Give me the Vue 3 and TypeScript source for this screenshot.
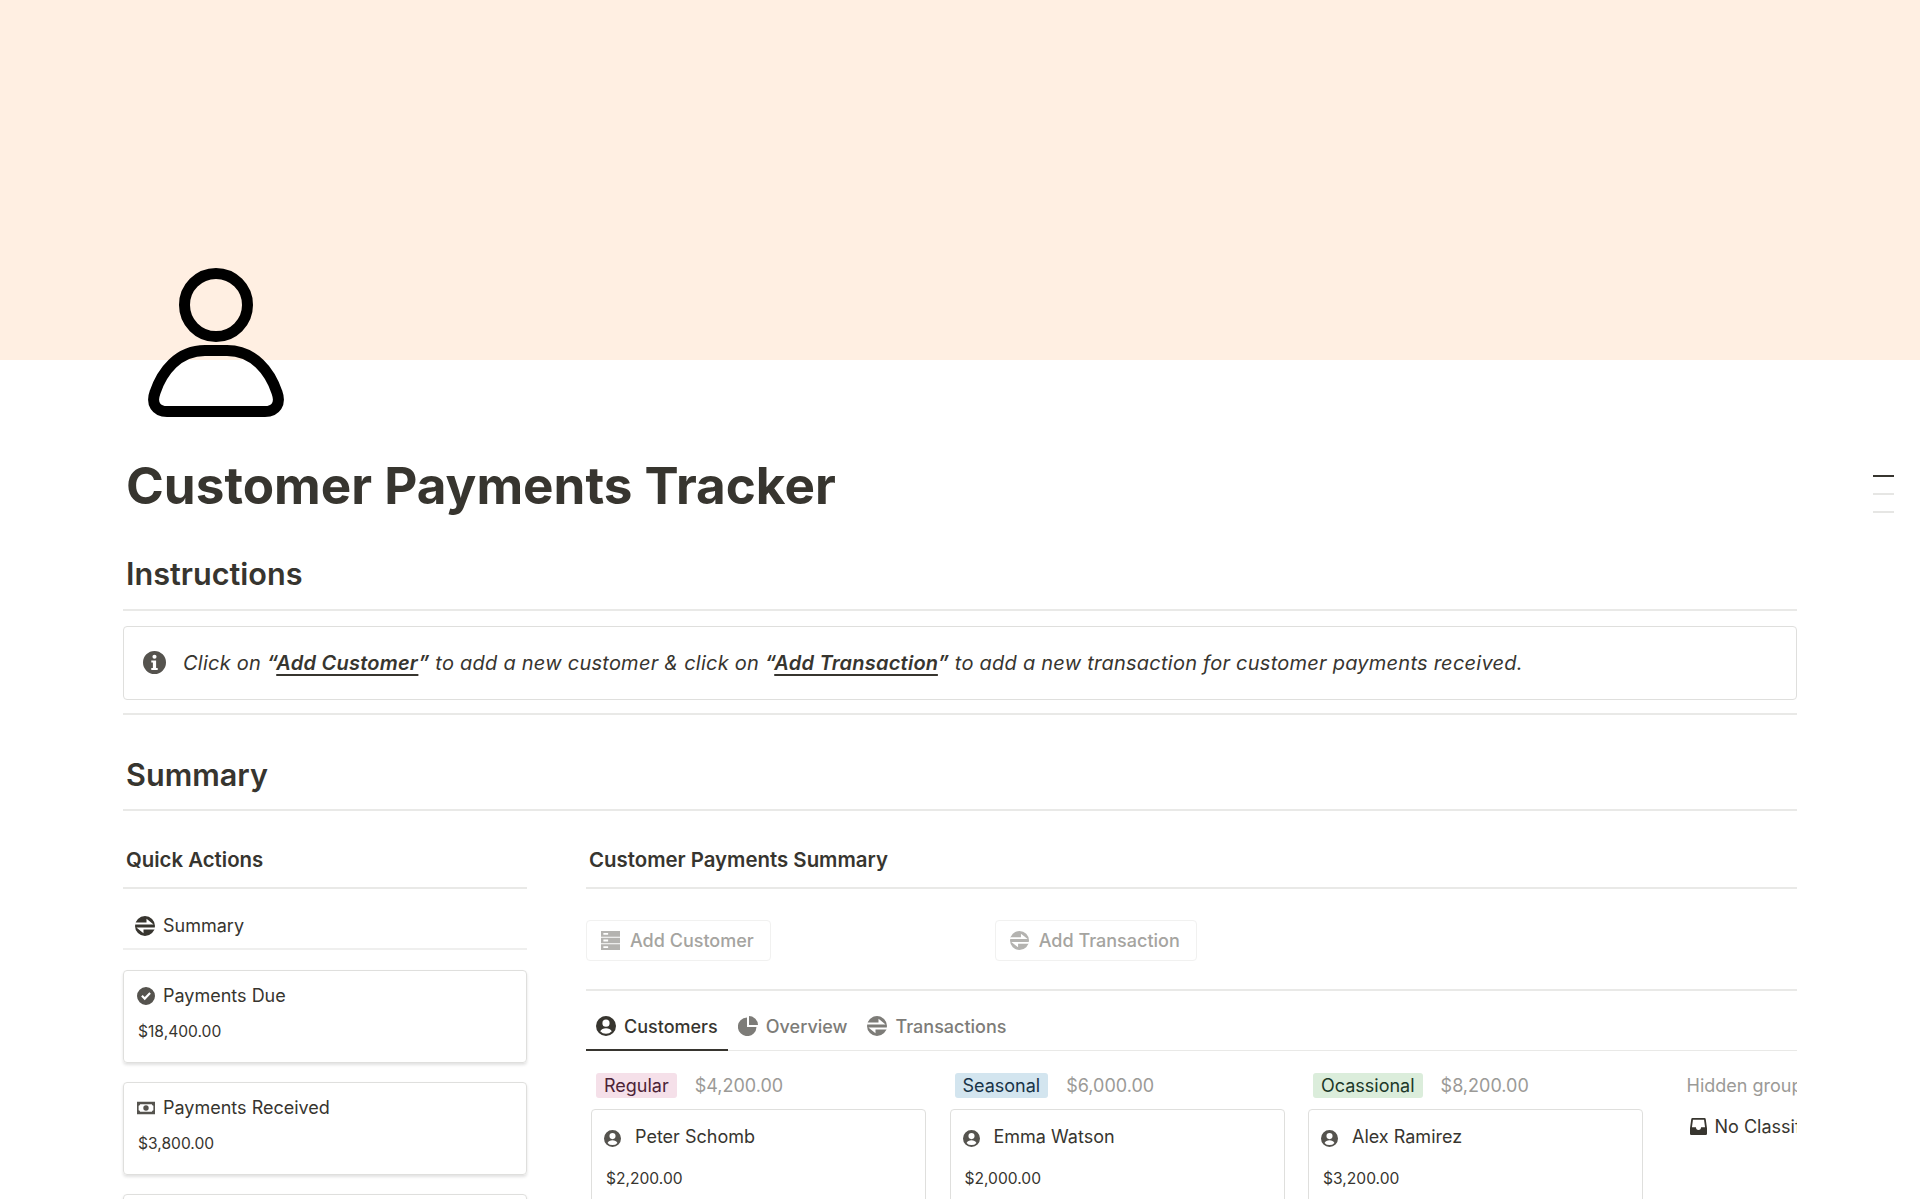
<script setup lang="ts">
const icons: Record<string, string> = {
  user: 'M10 0a10 10 0 1 0 0 20a10 10 0 1 0 0-20zM10 3.600a3.600 3.600 0 1 1 0 7.200a3.600 3.600 0 1 1 0-7.200zM4.200 15.200c1-2 3.200-3 5.800-3s4.800 1 5.800 3a7.800 7.800 0 0 1-11.600 0z',
  swap: 'M0 10a10 10 0 1 0 20 0a10 10 0 1 0-20 0zM.8 6.500H11.500V2.800L18.600 8.500H.2zM19.200 13.500H8.500v3.700L1.400 11.500H19.800z',
  check: 'M10 0a10 10 0 1 0 0 20a10 10 0 1 0 0-20zM8.600 14.600L4.600 10.600l1.700-1.700 2.300 2.300 5.100-5.400 1.700 1.600z',
  money: 'M0 3h20v14H0zM3.500 5.800a2 2 0 0 1-1.700 1.700v5a2 2 0 0 1 1.700 1.700h13a2 2 0 0 1 1.700-1.700v-5a2 2 0 0 1-1.700-1.700zM10 7a3 3 0 1 0 0 6a3 3 0 1 0 0-6z',
  table: 'M0 0h20v6H0zM2.500 2v2h5V2zM0 7h20v6H0zM2.500 9v2h5V9zM0 14h20v6H0zM2.500 16v2h5v-2z',
  pie: 'M9 1.500v9.500h9.500A9.300 9.300 0 1 1 9 1.500zM11 0a9 9 0 0 1 9 9h-9z',
  info: 'M10 0a10 10 0 1 0 0 20a10 10 0 1 0 0-20zM10 3.200a1.800 1.800 0 1 1 0 3.600a1.800 1.800 0 1 1 0-3.600zM7.200 8.200h4.200v6.600h1.400v1.800H7.200v-1.800h1.400v-4.800H7.200z',
  tray: 'M3 0h14a1.500 1.500 0 0 1 1.500 1.300L20 12v6.500a1.500 1.500 0 0 1-1.500 1.500h-17A1.500 1.500 0 0 1 0 18.500V12L1.500 1.300A1.500 1.500 0 0 1 3 0zM3.500 2L2.300 11h4.700a3 3 0 0 0 6 0h4.700L16.500 2z',
}
const tabs = [
  { label: 'Customers', icon: 'user', active: true },
  { label: 'Overview', icon: 'pie', active: false },
  { label: 'Transactions', icon: 'swap', active: false },
]
const groups = [
  { tag: 'Regular', cls: 'pink', total: '$4,200.00', name: 'Peter Schomb', amount: '$2,200.00' },
  { tag: 'Seasonal', cls: 'blue', total: '$6,000.00', name: 'Emma Watson', amount: '$2,000.00' },
  { tag: 'Ocassional', cls: 'green', total: '$8,200.00', name: 'Alex Ramirez', amount: '$3,200.00' },
]
const stats = [
  { label: 'Payments Due', icon: 'check', value: '$18,400.00' },
  { label: 'Payments Received', icon: 'money', value: '$3,800.00' },
]
</script>

<template>
  <div class="page">
    <div class="cover"></div>
    <div class="toc" aria-hidden="true">
      <span class="on"></span><span></span><span></span>
    </div>
    <main class="content">
      <svg class="page-icon" viewBox="0 0 138 150" fill="none" stroke="#000" stroke-width="11">
        <circle cx="69" cy="37" r="31.500" />
        <path d="M58 82.500h22c27 0 43 21 50 42 4 11-1 19-12 19H20c-11 0-16-8-12-19C15 103.500 31 82.500 58 82.500z" stroke-linejoin="round" />
      </svg>
      <h1>Customer Payments Tracker</h1>

      <h2 class="instr">Instructions</h2>
      <div class="rule"></div>
      <div class="callout">
        <svg class="ic info" viewBox="0 0 20 20"><path :d="icons.info" /></svg>
        <p>Click on <b>“<u>Add Customer</u>”</b> to add a new customer &amp; click on <b>“<u>Add Transaction</u>”</b> to add a new transaction for customer payments received.</p>
      </div>
      <div class="rule after-callout"></div>

      <h2 class="summary">Summary</h2>
      <div class="rule"></div>

      <div class="columns">
        <section class="left">
          <h3>Quick Actions</h3>
          <div class="rule"></div>
          <div class="view-row">
            <svg class="ic swap" viewBox="0 0 20 20"><path :d="icons.swap" /></svg>
            <span>Summary</span>
          </div>
          <div class="stat" v-for="s in stats" :key="s.label">
            <div class="stat-title">
              <span class="stat-ic"><svg class="ic" viewBox="0 0 20 20"><path :d="icons[s.icon]" /></svg></span>
              <span>{{ s.label }}</span>
            </div>
            <div class="stat-value">{{ s.value }}</div>
          </div>
          <div class="stat"></div>
        </section>

        <section class="right">
          <h3>Customer Payments Summary</h3>
          <div class="rule"></div>
          <div class="buttons">
            <div class="btn first">
              <svg class="ic" viewBox="0 0 20 20"><path :d="icons.table" /></svg>
              <span>Add Customer</span>
            </div>
            <div class="btn">
              <svg class="ic" viewBox="0 0 20 20"><path :d="icons.swap" /></svg>
              <span>Add Transaction</span>
            </div>
          </div>
          <div class="rule"></div>
          <div class="tabs">
            <div class="tab" v-for="t in tabs" :key="t.label" :class="{ active: t.active }">
              <svg class="ic" viewBox="0 0 20 20"><path :d="icons[t.icon]" /></svg>
              <span>{{ t.label }}</span>
            </div>
          </div>
          <div class="board">
            <div class="col" v-for="g in groups" :key="g.tag">
              <div class="col-head">
                <span class="tag" :class="g.cls">{{ g.tag }}</span>
                <span class="total">{{ g.total }}</span>
              </div>
              <div class="card">
                <div class="card-name">
                  <svg class="ic" viewBox="0 0 20 20"><path :d="icons.user" /></svg>
                  <span>{{ g.name }}</span>
                </div>
                <div class="card-amt">{{ g.amount }}</div>
              </div>
            </div>
            <div class="hidden-col">
              <div class="hidden-head">Hidden groups</div>
              <div class="hidden-item">
                <svg class="ic" viewBox="0 0 20 20"><path :d="icons.tray" /></svg>
                <span>No Classification</span>
              </div>
            </div>
          </div>
        </section>
      </div>
    </main>
  </div>
</template>

<style>
html, body { margin: 0; background: #fff; overflow: hidden; }
</style>

<style scoped>
.page {
  position: relative;
  height: 1199px;
  overflow: hidden;
  background: #fff;
  color: #37352f;
  font-family: Inter, "Liberation Sans", sans-serif;
}
.cover { height: 360px; background: #ffefe2; }
.toc { position: absolute; left: 1873px; top: 475px; display: flex; flex-direction: column; gap: 16px; }
.toc span { display: block; width: 21px; height: 2px; background: #e6e6e4; }
.toc span.on { background: #37352f; }
.content { margin: -92px 123px 0; width: 1674px; }
.page-icon { display: block; width: 138px; height: 150px; margin-left: 24px; position: relative; }
h1 { margin: 37px 0 0 3px; font-size: 51.200px; line-height: 60px; font-weight: 700; color: #37352f; }
h2 { margin: 0 0 0 3px; font-size: 30.600px; line-height: 38px; font-weight: 600; color: #37352f; }
.instr { margin-top: 40px; }
.summary { margin-top: 41px; }
.rule { height: 2px; background: #e9e9e7; }
.instr + .rule { margin-top: 16px; }
.summary + .rule { margin-top: 15px; }
.callout {
  display: flex;
  height: 74px;
  box-sizing: border-box;
  margin-top: 15px;
  padding: 0 19px;
  align-items: center;
  border: 1px solid #dfdfdd;
  border-radius: 4px;
  gap: 17px;
}
.callout .ic { width: 23px; height: 23px; fill: #55534e; margin-top: -2px; }
.callout p { margin: 0; font-size: 20px; font-style: italic; line-height: 28px; letter-spacing: 0.24px; }
.callout b { font-weight: 600; }
.callout u { text-decoration-thickness: 1.500px; text-underline-offset: 4px; }
.after-callout { margin-top: 13px; }
.columns { display: flex; gap: 59px; margin-top: 0; }
.left { width: 404px; flex: none; padding-top: 35.500px; }
.right { flex: 1; min-width: 0; padding-top: 35.500px; }
h3 { margin: 0 0 0 3px; font-size: 20.400px; line-height: 26px; font-weight: 600; color: #37352f; }
.left > .rule, .right > h3 + .rule { margin-top: 14px; }
.ic { display: block; width: 20px; height: 20px; fill: #55534e; flex: none; }
.ic path { fill-rule: evenodd; }
.view-row {
  display: flex;
  align-items: center;
  height: 61px;
  box-sizing: border-box;
  padding: 15px 0 0 12px;
  gap: 8px;
  font-size: 18px;
  border-bottom: 2px solid #efefee;
  margin-bottom: 20px;
}
.view-row .ic { fill: #37352f; }
.stat {
  box-sizing: border-box;
  height: 93px;
  margin-bottom: 19px;
  padding: 9px 12px;
  border: 1px solid #dfdfdd;
  border-radius: 4px;
  box-shadow: 0 2px 3px rgba(15, 15, 15, 0.12);
}
.stat-title { display: flex; align-items: center; height: 32px; gap: 7px; font-size: 18px; }
.stat-ic { width: 20px; display: flex; justify-content: center; }
.stat-ic .ic { width: 18px; height: 18px; }
.stat-value { margin: 6px 0 0 2px; font-size: 15.600px; line-height: 28px; }
.buttons { display: flex; margin-top: 31px; }
.btn {
  display: flex;
  align-items: center;
  height: 41px;
  box-sizing: border-box;
  padding: 0 16px 0 14px;
  gap: 10px;
  border: 1px solid #f1f1f0;
  border-radius: 4px;
  color: #a5a4a0;
  font-size: 18px;
  font-weight: 500;
}
.btn .ic { fill: #b4b3b0; width: 19px; height: 19px; }
.btn.first { margin-right: 224px; }
.buttons + .rule { margin-top: 28px; }
.tabs { display: flex; border-bottom: 1px solid #e9e9e7; height: 60px; box-sizing: border-box; }
.tab { display: flex; align-items: center; gap: 8px; padding: 12px 10px 0; color: #7d7c78; font-size: 18px; font-weight: 500; }
.tab .ic { fill: #7d7c78; }
.tab.active { color: #37352f; border-bottom: 2px solid #37352f; margin-bottom: -1px; padding-top: 13px; }
.tab.active .ic { fill: #37352f; }
.board { display: flex; padding-left: 5px; overflow: hidden; }
.col { width: 335px; flex: none; margin-right: 23.500px; }
.col-head { display: flex; align-items: center; height: 25px; margin-top: 22px; padding-left: 5px; gap: 18px; }
.tag { height: 25px; line-height: 25px; padding: 0 8px; border-radius: 3px; font-size: 18px; }
.tag.pink { background: #f5e0e9; color: #4c2337; }
.tag.blue { background: #d3e5ef; color: #183347; }
.tag.green { background: #dbeddb; color: #1c3829; }
.total { color: #9b9a97; font-size: 18px; }
.card { margin-top: 11px; height: 110px; box-sizing: border-box; border: 1px solid #dfdfdd; border-radius: 4px; padding: 13px 13px; }
.card-name { display: flex; align-items: center; gap: 14px; font-size: 18px; line-height: 28px; }
.card-name .ic { width: 17px; height: 17px; margin-top: 3px; margin-left: -1px; }
.card-amt { margin: 14px 0 0 1px; font-size: 15.600px; line-height: 28px; }
.hidden-col { flex: none; margin-left: 20px; width: 200px; }
.hidden-head { margin-top: 22px; height: 25px; line-height: 25px; color: #9b9a97; font-size: 18px; }
.hidden-item { display: flex; align-items: center; margin-top: 18px; gap: 8px; font-size: 18px; padding-left: 3px; white-space: nowrap; }
.hidden-item .ic { width: 17px; height: 17px; fill: #37352f; }
</style>
